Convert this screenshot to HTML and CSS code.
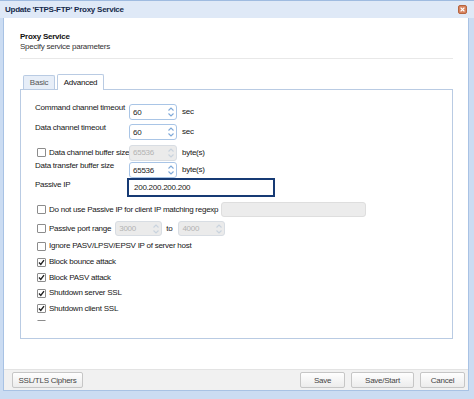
FILE: index.html
```html
<!DOCTYPE html>
<html>
<head>
<meta charset="utf-8">
<link rel="stylesheet" href="styles.css">
</head>
<body>
<div class="window">
  <div class="titlebar">
    <span class="title">Update 'FTPS-FTP' Proxy Service</span>
    <svg class="close" width="9" height="9" viewBox="0 0 9 9"><rect x="0.5" y="0.5" width="8" height="8" rx="1.5" fill="#d8835f" stroke="#b5643f"/><path d="M2.6 2.6 L6.4 6.4 M6.4 2.6 L2.6 6.4" stroke="#fff" stroke-width="1.3"/></svg>
  </div>
  <div class="body">
    <div class="header">
      <div class="h-title">Proxy Service</div>
      <div class="h-sub">Specify service parameters</div>
    </div>
    <div class="sep"></div>
    <div class="tabs">
      <div class="tab">Basic</div>
      <div class="tab active">Advanced</div>
    </div>
    <div class="panel">
      <div class="scroll">
        <div class="row h20">
          <div class="lbl">Command channel timeout</div>
          <div class="spin"><span>60</span><svg class="arr" width="8" height="12" viewBox="0 0 8 12"><path d="M1.5 4.5 L4 2 L6.5 4.5 M1.5 7.5 L4 10 L6.5 7.5" fill="none" stroke="#7ea8d8" stroke-width="1.1"/></svg></div>
          <div class="unit">sec</div>
        </div>
        <div class="row h19">
          <div class="lbl">Data channel timeout</div>
          <div class="spin"><span>60</span><svg class="arr" width="8" height="12" viewBox="0 0 8 12"><path d="M1.5 4.5 L4 2 L6.5 4.5 M1.5 7.5 L4 10 L6.5 7.5" fill="none" stroke="#7ea8d8" stroke-width="1.1"/></svg></div>
          <div class="unit">sec</div>
        </div>
        <div class="row h19 mid">
          <div class="lbl cbl"><span class="cb"></span>Data channel buffer size</div>
          <div class="spin disabled"><span>65536</span><svg class="arr" width="8" height="12" viewBox="0 0 8 12"><path d="M1.5 4.5 L4 2 L6.5 4.5 M1.5 7.5 L4 10 L6.5 7.5" fill="none" stroke="#c9d3de" stroke-width="1.1"/></svg></div>
          <div class="unit">byte(s)</div>
        </div>
        <div class="row h16">
          <div class="lbl">Data transfer buffer size</div>
          <div class="spin"><span>65536</span><svg class="arr" width="8" height="12" viewBox="0 0 8 12"><path d="M1.5 4.5 L4 2 L6.5 4.5 M1.5 7.5 L4 10 L6.5 7.5" fill="none" stroke="#7ea8d8" stroke-width="1.1"/></svg></div>
          <div class="unit">byte(s)</div>
        </div>
        <div class="row h22">
          <div class="lbl lbl-ip">Passive IP</div>
          <div class="ip">200.200.200.200</div>
        </div>
        <div class="row h19 mid">
          <span class="cb"></span><span class="ctext">Do not use Passive IP for client IP matching regexp</span>
          <div class="dis-input"></div>
        </div>
        <div class="row h19 mid">
          <span class="cb"></span><span class="ctext">Passive port range</span>
          <div class="spin disabled small port1"><span>3000</span><svg class="arr" width="8" height="12" viewBox="0 0 8 12"><path d="M1.5 4.5 L4 2 L6.5 4.5 M1.5 7.5 L4 10 L6.5 7.5" fill="none" stroke="#c9d3de" stroke-width="1.1"/></svg></div>
          <span class="to">to</span>
          <div class="spin disabled small"><span>4000</span><svg class="arr" width="8" height="12" viewBox="0 0 8 12"><path d="M1.5 4.5 L4 2 L6.5 4.5 M1.5 7.5 L4 10 L6.5 7.5" fill="none" stroke="#c9d3de" stroke-width="1.1"/></svg></div>
        </div>
        <div class="row h16 mid">
          <span class="cb"></span><span class="ctext">Ignore PASV/LPSV/EPSV IP of server host</span>
        </div>
        <div class="row h16 mid">
          <span class="cb"><svg width="7" height="7" viewBox="0 0 7 7"><path d="M1 3.6 L2.8 5.4 L6 1.2" fill="none" stroke="#222" stroke-width="1.4"/></svg></span><span class="ctext">Block bounce attack</span>
        </div>
        <div class="row h15 mid">
          <span class="cb"><svg width="7" height="7" viewBox="0 0 7 7"><path d="M1 3.6 L2.8 5.4 L6 1.2" fill="none" stroke="#222" stroke-width="1.4"/></svg></span><span class="ctext">Block PASV attack</span>
        </div>
        <div class="row h16 mid">
          <span class="cb"><svg width="7" height="7" viewBox="0 0 7 7"><path d="M1 3.6 L2.8 5.4 L6 1.2" fill="none" stroke="#222" stroke-width="1.4"/></svg></span><span class="ctext">Shutdown server SSL</span>
        </div>
        <div class="row h15 mid">
          <span class="cb"><svg width="7" height="7" viewBox="0 0 7 7"><path d="M1 3.6 L2.8 5.4 L6 1.2" fill="none" stroke="#222" stroke-width="1.4"/></svg></span><span class="ctext">Shutdown client SSL</span>
        </div>
        <div class="row h16 mid">
          <span class="cb"></span>
        </div>
      </div>
    </div>
    <div class="spacer"></div>
    <div class="footer">
      <div class="btn b-ssl">SSL/TLS Ciphers</div>
      <div class="grow"></div>
      <div class="btn b-save">Save</div>
      <div class="btn b-start">Save/Start</div>
      <div class="btn b-cancel">Cancel</div>
    </div>
  </div>
</div>
</body>
</html>
```

FILE: styles.css
```css
html, body {
  margin: 0;
  padding: 0;
}
body {
  font-family: "Liberation Sans", Arial, sans-serif;
  font-size: 8px;
  letter-spacing: -0.25px;
  color: #161616;
}
.window {
  width: 474px;
  height: 399px;
  background: #cbdcf2;
  display: flex;
  flex-direction: column;
  overflow: hidden;
}
.titlebar {
  height: 17px;
  flex: none;
  border-top: 1px solid #9fbbe0;
  background: #dfe9f7;
  display: flex;
  align-items: center;
  justify-content: space-between;
  padding: 0 7px 0 5px;
}
.title {
  font-weight: bold;
  color: #15294b;
}
.close {
  display: block;
}
.body {
  flex: 1;
  margin: 0 5px 8px 3px;
  background: #fff;
  border: 1px solid #a8c2e4;
  border-top: none;
  display: flex;
  flex-direction: column;
}
.header {
  padding: 14px 0 0 16px;
  line-height: 10px;
}
.h-title {
  font-weight: bold;
  color: #111;
}
.h-sub {
  color: #333;
}
.sep {
  height: 1px;
  background: #e8e8e8;
  margin: 6px 15px 0 16px;
}
.tabs {
  display: flex;
  align-items: flex-end;
  height: 15px;
  margin: 15px 0 0 19px;
}
.tab {
  box-sizing: border-box;
  height: 14px;
  width: 32px;
  border: 1px solid #b9cbe3;
  border-bottom: none;
  border-radius: 2px 2px 0 0;
  background: #e7eef8;
  display: flex;
  align-items: center;
  justify-content: center;
  color: #555;
}
.tab.active {
  width: 47px;
  height: 16px;
  margin-left: 2px;
  margin-bottom: -1px;
  background: #fff;
  color: #111;
  position: relative;
}
.panel {
  margin: 0 15px 0 16px;
  height: 248px;
  border: 1px solid #b9cbe3;
}
.scroll {
  height: 231px;
  box-sizing: border-box;
  overflow: hidden;
  padding: 14px 0 0 14px;
}
.row {
  display: flex;
  align-items: flex-start;
  white-space: nowrap;
}
.row.mid {
  align-items: center;
}
.h15 { height: 15px; }
.h16 { height: 16px; }
.h19 { height: 19px; }
.h20 { height: 20px; }
.h22 { height: 22px; }
.lbl {
  width: 94px;
  flex: none;
  line-height: 10px;
  margin-top: -1px;
}
.lbl.cbl {
  margin-top: 0;
  display: flex;
  align-items: center;
}
.lbl-ip {
  width: 92px;
  margin-top: 2px;
}
.cb {
  width: 9px;
  height: 9px;
  flex: none;
  box-sizing: border-box;
  border: 1px solid #8c8c8c;
  border-radius: 1px;
  background: #fff;
  margin: 0 3px 0 2px;
  display: flex;
  align-items: center;
  justify-content: center;
}
.cb svg {
  display: block;
}
.ctext {
  line-height: 10px;
}
.spin {
  width: 48px;
  height: 16px;
  flex: none;
  box-sizing: border-box;
  border: 1px solid #a9c5e6;
  border-radius: 3px;
  background: #fff;
  display: flex;
  align-items: center;
  justify-content: space-between;
  padding: 0 1px 0 3px;
  color: #222;
}
.spin .arr {
  display: block;
}
.spin.disabled {
  background: #ebebeb;
  border-color: #d8dde3;
  color: #b3b3b3;
}
.spin.small {
  width: 47px;
  height: 15px;
}
.port1 {
  margin-left: 4px;
}
.to {
  margin: 0 6px 0 4px;
}
.unit {
  margin-left: 5px;
  line-height: 16px;
}
.ip {
  width: 148px;
  height: 19px;
  box-sizing: border-box;
  border: 2px solid #163a74;
  padding: 0 5px;
  line-height: 15px;
  color: #222;
}
.dis-input {
  width: 145px;
  height: 15px;
  box-sizing: border-box;
  margin-left: 3px;
  border: 1px solid #dedede;
  border-radius: 3px;
  background: #ececec;
}
.spacer {
  flex: 1;
}
.footer {
  height: 20px;
  flex: none;
  border-top: 1px solid #e3e3e3;
  background: #f1f1f1;
  display: flex;
  align-items: center;
  padding: 0 3px 0 8px;
}
.grow {
  flex: 1;
}
.btn {
  height: 16px;
  box-sizing: border-box;
  border: 1px solid #c6c6c6;
  border-radius: 2px;
  background: linear-gradient(#fefefe, #ececec);
  color: #444;
  display: flex;
  align-items: center;
  justify-content: center;
}
.b-ssl { width: 71px; }
.b-save { width: 45px; }
.b-start { width: 63px; margin-left: 6px; }
.b-cancel { width: 45px; margin-left: 6px; }
```
